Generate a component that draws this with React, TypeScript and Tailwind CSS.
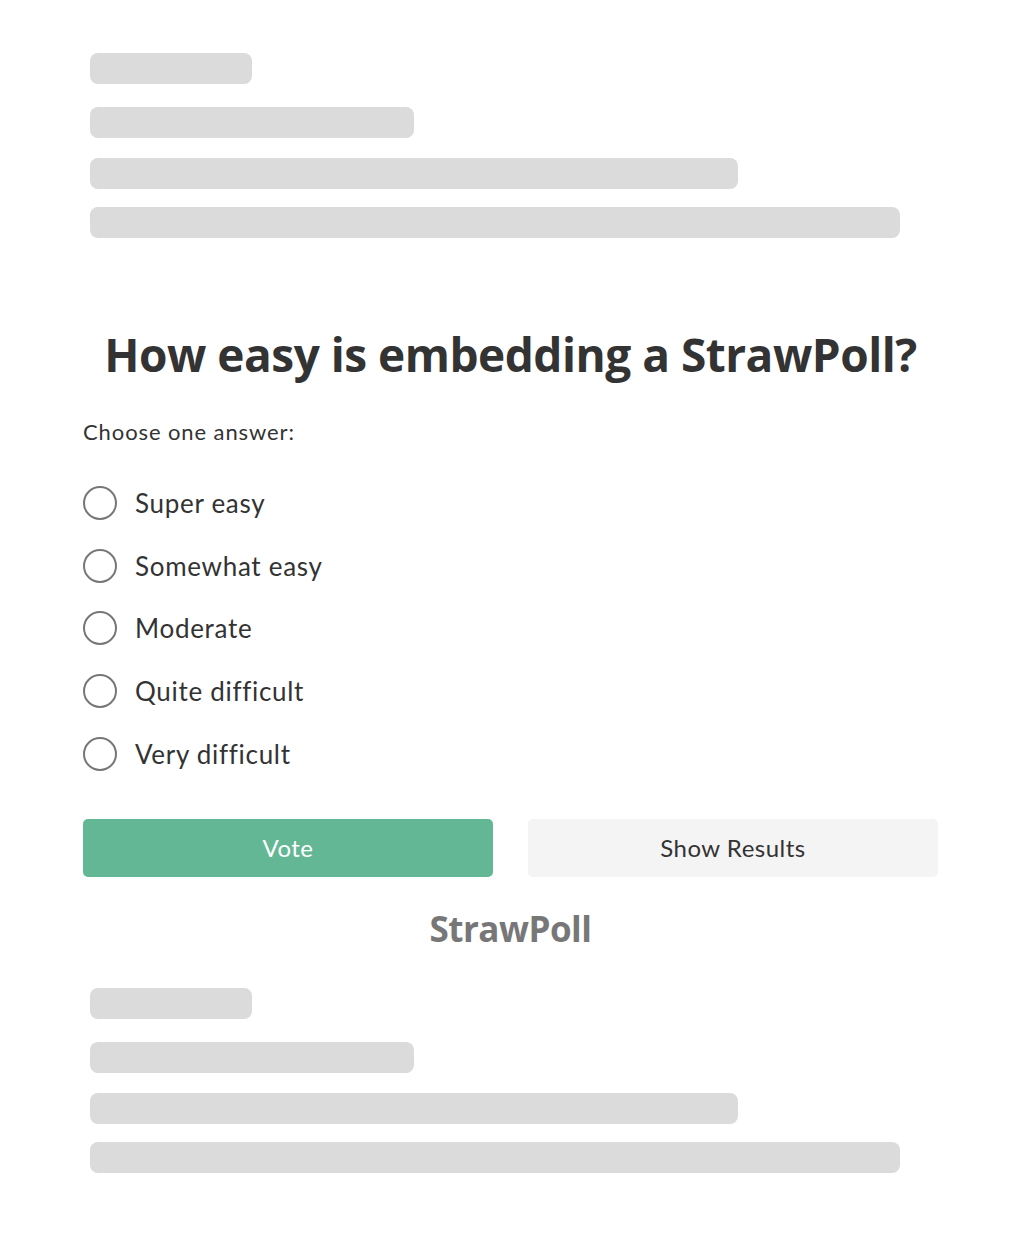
import React from 'react';

const options = ['Super easy', 'Somewhat easy', 'Moderate', 'Quite difficult', 'Very difficult'];

// Placeholder lines standing in for page text around the embed
const Skeleton: React.FC = () => (
  <div className="flex flex-col pl-[90px]">
    <div className="h-[31px] w-[162px] rounded-lg bg-[#dbdbdb]" />
    <div className="mt-[23px] h-[31px] w-[324px] rounded-lg bg-[#dbdbdb]" />
    <div className="mt-[20px] h-[31px] w-[648px] rounded-lg bg-[#dbdbdb]" />
    <div className="mt-[18px] h-[31px] w-[810px] rounded-lg bg-[#dbdbdb]" />
  </div>
);

const App: React.FC = () => {
  return (
    <div className="min-h-[1251px] w-[1024px] bg-white pt-[53px] font-['Lato',sans-serif] text-[#333]">
      <Skeleton />

      <div className="ml-[83px] mt-[86px] w-[855px]">
        <h1 className="text-center font-['Open_Sans',sans-serif] text-[46px] font-bold leading-[60px] tracking-[-0.5px] text-[#333]">
          How easy is embedding a StrawPoll?
        </h1>

        <p className="mt-[34px] text-[22px] leading-[28px] tracking-[0.9px] text-[#333]">Choose one answer:</p>

        <div className="mt-[40px] flex flex-col gap-[28.7px]">
          {options.map((opt) => (
            <label key={opt} className="flex h-[34px] items-center gap-[18px]">
              <span className="h-[34px] w-[34px] shrink-0 rounded-full border-[2.5px] border-[#777]" />
              <span className="text-[26px] leading-[34px] tracking-[0.7px] text-[#333]">{opt}</span>
            </label>
          ))}
        </div>

        <div className="mt-[48px] flex gap-[35px]">
          <button className="h-[58px] w-[410px] rounded-[5px] bg-[#63b794] text-[24px] tracking-[0.5px] text-white">
            Vote
          </button>
          <button className="h-[58px] w-[410px] rounded-[5px] bg-[#f4f4f4] text-[24px] tracking-[0.5px] text-[#333]">
            Show Results
          </button>
        </div>

        <div className="mt-[28px] text-center font-['Open_Sans',sans-serif] text-[35px] font-bold leading-[48px] tracking-[-0.5px] text-[#777]">
          StrawPoll
        </div>
      </div>

      <div className="mt-[35px]">
        <Skeleton />
      </div>
    </div>
  );
};

export default App;
